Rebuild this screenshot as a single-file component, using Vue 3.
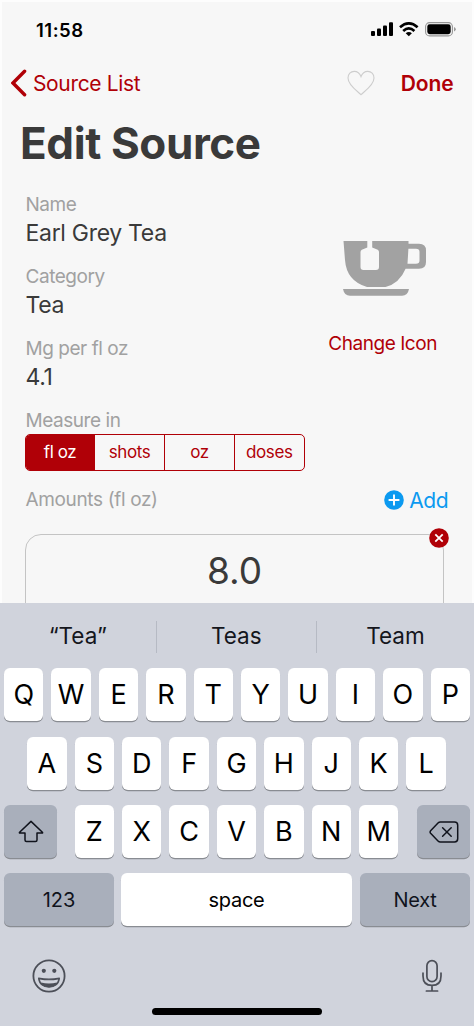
<script setup>
const fields = [
  { label: 'Name', value: 'Earl Grey Tea', cls: 'name' },
  { label: 'Category', value: 'Tea', cls: 'category' },
  { label: 'Mg per fl oz', value: '4.1', cls: 'mg' },
]
const units = ['fl oz', 'shots', 'oz', 'doses']
const suggestions = ['“Tea”', 'Teas', 'Team']
const row1 = 'QWERTYUIOP'.split('')
const row2 = 'ASDFGHJKL'.split('')
const row3 = 'ZXCVBNM'.split('')
</script>

<template>
  <div class="screen">
    <main class="page">
      <div class="status">
        <span class="time">11:58</span>
        <svg class="status-icons" width="86" height="16" viewBox="0 0 86 16">
          <rect x="0" y="9" width="4" height="5" rx="1" />
          <rect x="6" y="6.5" width="4" height="7.5" rx="1" />
          <rect x="12" y="3.5" width="4" height="10.5" rx="1" />
          <rect x="18" y="0.3" width="4" height="13.7" rx="1" />
          <g fill="none" stroke="#000" stroke-width="2.7">
            <path d="M29 5.2Q37.8 -2.4 46.6 5.2" />
            <path d="M32.2 8.9Q37.8 4 43.4 8.9" />
          </g>
          <path d="M34.7 11.2Q37.8 8.6 40.9 11.2L37.8 14.2Z" />
          <rect x="54.6" y="0.6" width="26.8" height="13.3" rx="4" fill="none" stroke="#969696" stroke-width="1.1" />
          <rect x="56.3" y="2.3" width="23.4" height="9.9" rx="2.4" />
          <path d="M83 5.1Q84.8 5.8 84.8 7.3T83 9.5Z" fill="#999" />
        </svg>
      </div>

      <nav class="nav">
        <svg width="16" height="28" viewBox="0 0 16 28">
          <path d="M13.6 2.3L2 14L13.6 25.7" fill="none" stroke="#b00007" stroke-width="3.4" stroke-linecap="round" stroke-linejoin="miter" />
        </svg>
        <span class="back">Source List</span>
        <svg class="heart" width="28" height="26" viewBox="0 0 28 26">
          <path d="M14 24.7C11 21.5 1 15.3 1 8C1 4 3.8 1.4 7.2 1.4C10.4 1.4 12.9 3.6 14 6.6C15.1 3.6 17.6 1.4 20.8 1.4C24.2 1.4 27 4 27 8C27 15.3 17 21.5 14 24.7Z" fill="none" stroke="#cdcdcd" stroke-width="1.1" />
        </svg>
        <span class="done">Done</span>
      </nav>

      <h1>Edit Source</h1>

      <section class="details">
        <div class="fields">
          <div v-for="f in fields" :key="f.label" class="field" :class="f.cls">
            <div class="label">{{ f.label }}</div>
            <div class="value">{{ f.value }}</div>
          </div>
        </div>
        <div class="picker">
          <svg width="84" height="58" viewBox="0 0 84 58" fill="#a2a2a2">
            <path d="M0.5 1H24.3V7.5L18.8 9.7Q17.5 10.4 17.5 12V27Q17.5 30 20.5 30H33Q36 30 36 27V12Q36 10.4 34.7 9.7L29.2 7.5V1H65.5V3.7H76Q83 3.7 83 10.5V22Q83 28.8 76 28.8H62.6Q56.5 43.5 42.5 47H24Q3.5 41 2 20ZM65.4 8.8L64.5 23.8H73Q76.5 23.8 76.5 20.5V12Q76.5 8.8 73 8.8Z" fill-rule="evenodd" />
            <path d="M0 49H66Q64.8 55.7 59 55.7H7Q1.2 55.7 0 49Z" />
          </svg>
          <span class="change">Change Icon</span>
        </div>
      </section>

      <div class="label measure">Measure in</div>
      <div class="segments">
        <span v-for="(u, i) in units" :key="u" class="segment" :class="{ on: i === 0 }">{{ u }}</span>
      </div>

      <div class="amounts">
        <span class="label amount-label">Amounts (fl oz)</span>
        <svg width="20" height="20" viewBox="0 0 20 20">
          <circle cx="10" cy="10" r="9.8" fill="#0c9af0" />
          <path d="M10 4.6V15.4M4.6 10H15.4" stroke="#fff" stroke-width="1.9" />
        </svg>
        <span class="add">Add</span>
      </div>

      <div class="card">
        8.0
        <svg class="remove" width="20" height="20" viewBox="0 0 20 20">
          <circle cx="10" cy="10" r="9.8" fill="#b00007" />
          <path d="M6.3 6.3L13.7 13.7M13.7 6.3L6.3 13.7" stroke="#fff" stroke-width="1.8" />
        </svg>
      </div>
    </main>

    <section class="keyboard">
      <div class="suggestions">
        <span v-for="s in suggestions" :key="s">{{ s }}</span>
      </div>
      <div class="keys">
        <kbd v-for="k in row1" :key="k">{{ k }}</kbd>
      </div>
      <div class="keys middle">
        <kbd v-for="k in row2" :key="k">{{ k }}</kbd>
      </div>
      <div class="keys spread">
        <kbd class="dark side">
          <svg width="26" height="23" viewBox="0 0 26 23">
            <path d="M13 1.4L24.4 12.3Q25 13 24 13H19V20Q19 21.5 17.5 21.5H8.5Q7 21.5 7 20V13H2Q1 13 1.6 12.3Z" fill="none" stroke="#10131c" stroke-width="1.5" stroke-linejoin="round" />
          </svg>
        </kbd>
        <div class="group">
          <kbd v-for="k in row3" :key="k">{{ k }}</kbd>
        </div>
        <kbd class="dark side">
          <svg width="30" height="22" viewBox="0 0 30 22">
            <g fill="none" stroke="#10131c" stroke-width="1.5" stroke-linejoin="round" stroke-linecap="round">
              <path d="M11.4 1H25.5Q28.7 1 28.7 4.2V17.8Q28.7 21 25.5 21H11.4Q10 21 9 20L1.6 12.3Q.6 11 1.6 9.7L9 2Q10 1 11.4 1Z" />
              <path d="M13.6 6.7L22.2 15.3M22.2 6.7L13.6 15.3" />
            </g>
          </svg>
        </kbd>
      </div>
      <div class="keys spread words">
        <kbd class="dark wide num">123</kbd>
        <kbd class="space">space</kbd>
        <kbd class="dark wide next">Next</kbd>
      </div>
      <div class="tools">
        <svg width="34" height="34" viewBox="0 0 34 34">
          <circle cx="17" cy="17" r="15.6" fill="none" stroke="#4c4f58" stroke-width="1.8" />
          <circle cx="11.8" cy="11.8" r="2.1" fill="#4c4f58" />
          <circle cx="22.3" cy="11.8" r="2.1" fill="#4c4f58" />
          <path d="M6.6 19.2Q17 21.2 27.4 19.2C27 25 22.5 28.2 17 28.2S7 25 6.6 19.2Z" fill="#4c4f58" stroke="#4c4f58" stroke-width="1.2" stroke-linejoin="round" />
          <path d="M7.8 20.4Q17 22.2 26.2 20.4L25 23.4Q17 25.4 9 23.4Z" fill="#d0d3dc" />
        </svg>
        <svg width="20" height="34" viewBox="0 0 20 34" fill="none" stroke="#4c4f58" stroke-width="1.7">
          <rect x="4.9" y="1.6" width="10.2" height="21" rx="5.1" />
          <path d="M1 14V16.9Q1 26.4 10 26.4T19 16.9V14M10 26.4V31.6M4.4 32H15.6" stroke-linecap="round" />
        </svg>
      </div>
      <div class="home"></div>
    </section>
  </div>
</template>

<style>
body { margin: 0; background: #fff; }
</style>

<style scoped>
.screen {
  box-sizing: border-box;
  width: 474px;
  height: 1026px;
  overflow: hidden;
  font-family: Inter, "Liberation Sans", sans-serif;
  color: #3a3a3a;
  white-space: nowrap;
}
.page {
  box-sizing: border-box;
  height: 603px;
  padding: 10px 0 0;
  background: #f7f7f7;
  border: solid #fdfdfd;
  border-width: 2px 2px 0;
  overflow: hidden;
}
.status {
  display: flex;
  align-items: center;
  justify-content: space-between;
  height: 36px;
  padding: 0 15px 0 34px;
  color: #000;
}
.time { font-size: 18.5px; font-weight: 600; letter-spacing: 0.5px; }
.status-icons { display: block; }
.nav {
  display: flex;
  align-items: center;
  height: 36px;
  margin-top: 17px;
  padding: 0 18.5px 0 9px;
  color: #b00007;
  font-size: 21px;
}
.back { margin-left: 6px; letter-spacing: -0.35px; }
.heart { margin-left: auto; }
.done { margin-left: 26px; font-weight: 600; letter-spacing: -0.1px; }
h1 {
  margin: 17px 0 0 18px;
  font-size: 44px;
  line-height: 50px;
  font-weight: 700;
  letter-spacing: -0.4px;
}
.details { display: flex; justify-content: space-between; margin: 23px 35px 0 23.5px; }
.field { height: 72px; }
.label { font-size: 19px; line-height: 28px; color: #a1a1a1; letter-spacing: -0.45px; }
.value { font-size: 23px; line-height: 28px; letter-spacing: -0.3px; }
.picker { display: flex; flex-direction: column; align-items: center; padding-top: 49px; }
.picker svg { margin-left: 4px; }
.change { margin-top: 32px; font-size: 19px; line-height: 28px; color: #b00007; letter-spacing: -0.45px; }
.measure { margin: 0 0 0 23.5px; }
.segments {
  display: grid;
  grid-template-columns: 68px 70px 70px 1fr;
  box-sizing: border-box;
  width: 279.5px;
  height: 37px;
  margin: -1px 0 0 23px;
  border: 1.3px solid #b00007;
  border-radius: 5px;
  overflow: hidden;
}
.segment {
  line-height: 35px;
  font-size: 17px;
  letter-spacing: -0.4px;
  text-align: center;
  color: #b00007;
}
.segment + .segment { border-left: 1px solid #b00007; }
.segment.on { background: #b00007; color: #fff; }
.amounts { display: flex; align-items: center; height: 28px; margin: 15px 24px 0 23.5px; }
.amount-label { letter-spacing: -0.35px; }
.amounts svg { margin-left: auto; }
.add { margin-left: 5px; font-size: 21px; color: #0c9af0; letter-spacing: -0.5px; }
.card {
  position: relative;
  height: 90px;
  margin: 20px 28px 0 23px;
  border: 1px solid #c4c4c4;
  border-radius: 16px;
  font-size: 37px;
  line-height: 72px;
  text-align: center;
}
.remove { position: absolute; top: -7px; right: -6px; }
.keyboard {
  box-sizing: border-box;
  height: 423px;
  background: #d0d3dc;
  color: #000;
  display: flex;
  flex-direction: column;
}
.suggestions {
  display: grid;
  grid-template-columns: 155.5px 160.5px 158px;
  padding-top: 18px;
  height: 47.25px;
}
.suggestions span {
  height: 32px;
  line-height: 30px;
  font-size: 22.5px;
  text-align: center;
  color: #14161c;
}
.suggestions span + span { border-left: 1px solid #b6bac4; }
.keys { display: flex; justify-content: center; gap: 8.05px; height: 53px; margin: 0 4px 15.4px; }
.middle { margin-left: 3px; }
.spread { justify-content: space-between; }
.group { display: flex; gap: 8.05px; margin-right: 1px; }
kbd {
  display: flex;
  align-items: center;
  justify-content: center;
  width: 39.35px;
  height: 53px;
  border-radius: 6px;
  background: #fff;
  box-shadow: 0 1.3px 0 #898c92;
  font-family: inherit;
  font-size: 27px;
}
.dark { background: #a9afbb; color: #10131c; }
.side { width: 53px; }
.wide { width: 110px; }
.words { gap: 0; }
.words kbd { font-size: 20px; letter-spacing: -0.25px; }
.space { width: 231px; margin-right: 1px; }
.words .num { letter-spacing: 0; }
.tools { display: flex; justify-content: space-between; padding: 17px 32px 0; }
.home { width: 170px; height: 7px; margin: 15px auto 0; border-radius: 4px; background: #000; }
</style>
